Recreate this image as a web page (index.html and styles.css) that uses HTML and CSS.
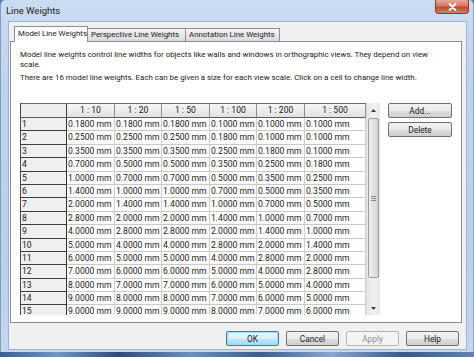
FILE: index.html
```html
<!DOCTYPE html>
<html>
<head>
<meta charset="utf-8">
<title>Line Weights</title>
<link rel="stylesheet" href="styles.css">
</head>
<body>
<div class="window">
  <div class="titlebar">
    <span class="title">Line Weights</span>
    <div class="close"><svg width="9" height="8" viewBox="0 0 9 8"><path d="M1.5 1 L7.5 7 M7.5 1 L1.5 7" stroke="#fff" stroke-width="1.8" stroke-linecap="round"/></svg></div>
  </div>
  <div class="client">
    <div class="tabs">
      <div class="tab active t1">Model Line Weights</div>
      <div class="tab t2">Perspective Line Weights</div>
      <div class="tab t3">Annotation Line Weights</div>
    </div>
    <div class="panel">
      <p class="para">Model line weights control line widths for objects like walls and windows in orthographic views. They depend on view scale.</p>
      <p class="para">There are 16 model line weights. Each can be given a size for each view scale. Click on a cell to change line width.</p>
      <div class="content-row">
        <div class="grid-wrap">
          <div class="viewport">
            <div class="grid">
              <div class="hc corner"></div><div class="hc">1 : 10</div><div class="hc">1 : 20</div><div class="hc">1 : 50</div><div class="hc">1 : 100</div><div class="hc">1 : 200</div><div class="hc last">1 : 500</div>
              <div class="rh">1</div><div class="c">0.1800 mm</div><div class="c">0.1800 mm</div><div class="c">0.1800 mm</div><div class="c">0.1000 mm</div><div class="c">0.1000 mm</div><div class="c">0.1000 mm</div>
              <div class="rh">2</div><div class="c">0.2500 mm</div><div class="c">0.2500 mm</div><div class="c">0.2500 mm</div><div class="c">0.1800 mm</div><div class="c">0.1000 mm</div><div class="c">0.1000 mm</div>
              <div class="rh">3</div><div class="c">0.3500 mm</div><div class="c">0.3500 mm</div><div class="c">0.3500 mm</div><div class="c">0.2500 mm</div><div class="c">0.1800 mm</div><div class="c">0.1000 mm</div>
              <div class="rh">4</div><div class="c">0.7000 mm</div><div class="c">0.5000 mm</div><div class="c">0.5000 mm</div><div class="c">0.3500 mm</div><div class="c">0.2500 mm</div><div class="c">0.1800 mm</div>
              <div class="rh">5</div><div class="c">1.0000 mm</div><div class="c">0.7000 mm</div><div class="c">0.7000 mm</div><div class="c">0.5000 mm</div><div class="c">0.3500 mm</div><div class="c">0.2500 mm</div>
              <div class="rh">6</div><div class="c">1.4000 mm</div><div class="c">1.0000 mm</div><div class="c">1.0000 mm</div><div class="c">0.7000 mm</div><div class="c">0.5000 mm</div><div class="c">0.3500 mm</div>
              <div class="rh">7</div><div class="c">2.0000 mm</div><div class="c">1.4000 mm</div><div class="c">1.4000 mm</div><div class="c">1.0000 mm</div><div class="c">0.7000 mm</div><div class="c">0.5000 mm</div>
              <div class="rh">8</div><div class="c">2.8000 mm</div><div class="c">2.0000 mm</div><div class="c">2.0000 mm</div><div class="c">1.4000 mm</div><div class="c">1.0000 mm</div><div class="c">0.7000 mm</div>
              <div class="rh">9</div><div class="c">4.0000 mm</div><div class="c">2.8000 mm</div><div class="c">2.8000 mm</div><div class="c">2.0000 mm</div><div class="c">1.4000 mm</div><div class="c">1.0000 mm</div>
              <div class="rh">10</div><div class="c">5.0000 mm</div><div class="c">4.0000 mm</div><div class="c">4.0000 mm</div><div class="c">2.8000 mm</div><div class="c">2.0000 mm</div><div class="c">1.4000 mm</div>
              <div class="rh">11</div><div class="c">6.0000 mm</div><div class="c">5.0000 mm</div><div class="c">5.0000 mm</div><div class="c">4.0000 mm</div><div class="c">2.8000 mm</div><div class="c">2.0000 mm</div>
              <div class="rh">12</div><div class="c">7.0000 mm</div><div class="c">6.0000 mm</div><div class="c">6.0000 mm</div><div class="c">5.0000 mm</div><div class="c">4.0000 mm</div><div class="c">2.8000 mm</div>
              <div class="rh">13</div><div class="c">8.0000 mm</div><div class="c">7.0000 mm</div><div class="c">7.0000 mm</div><div class="c">6.0000 mm</div><div class="c">5.0000 mm</div><div class="c">4.0000 mm</div>
              <div class="rh">14</div><div class="c">9.0000 mm</div><div class="c">8.0000 mm</div><div class="c">8.0000 mm</div><div class="c">7.0000 mm</div><div class="c">6.0000 mm</div><div class="c">5.0000 mm</div>
              <div class="rh">15</div><div class="c">9.0000 mm</div><div class="c">9.0000 mm</div><div class="c">9.0000 mm</div><div class="c">8.0000 mm</div><div class="c">7.0000 mm</div><div class="c">6.0000 mm</div>
            </div>
          </div>
          <div class="scrollbar">
            <div class="sb-btn"><svg width="5" height="3" viewBox="0 0 5 3"><path d="M0 3 L2.5 0 L5 3 Z" fill="#3a3a3a"/></svg></div>
            <div class="sb-thumb"><svg width="5" height="5" viewBox="0 0 5 5"><path d="M0 0.5H5M0 2.5H5M0 4.5H5" stroke="#8a8a8a" stroke-width="1"/></svg></div>
            <div class="sb-track"></div>
            <div class="sb-btn"><svg width="5" height="3" viewBox="0 0 5 3"><path d="M0 0 L2.5 3 L5 0 Z" fill="#3a3a3a"/></svg></div>
          </div>
        </div>
        <div class="side-buttons">
          <button class="btn">Add...</button>
          <button class="btn">Delete</button>
        </div>
      </div>
    </div>
    <div class="footer">
      <button class="btn default">OK</button>
      <button class="btn">Cancel</button>
      <button class="btn disabled">Apply</button>
      <button class="btn">Help</button>
    </div>
  </div>
</div>
<div class="desk"></div>
</body>
</html>
```

FILE: styles.css
```css
* { box-sizing: border-box; }
html, body { margin: 0; padding: 0; }
body {
  width: 474px;
  height: 357px;
  overflow: hidden;
  font-family: Roboto, "Noto Sans", sans-serif;
  background: #5a7aa8;
}
.window {
  height: 352px;
  display: flex;
  flex-direction: column;
  background: linear-gradient(#cadcf0, #bed4ec 25%, #b9d0ea 70%, #c3d7ee);
  border-left: 1px solid #7f9cc2;
  border-right: 1px solid #8aa6c9;
  border-radius: 5px 5px 0 0;
}
.titlebar {
  height: 21px;
  flex: none;
  display: flex;
  align-items: flex-start;
  padding-left: 5px;
}
.title {
  font-size: 9.5px;
  line-height: 21px;
  color: #1c1c1c;
}
.close {
  margin-left: auto;
  margin-right: 4px;
  width: 34px;
  height: 14px;
  display: flex;
  align-items: center;
  justify-content: center;
  background: linear-gradient(#e9a896, #d77762 45%, #c4462f 55%, #d3806a);
  border: 1px solid #8a3a2c;
  border-top: none;
  border-radius: 0 0 4px 4px;
}
.client {
  flex: 1;
  margin: 0 6px 2px 7px;
  background: #f0f0f0;
  border: 1px solid #9db3cf;
  padding: 4px 4px 0 1px;
  display: flex;
  flex-direction: column;
}
.tabs {
  height: 15px;
  flex: none;
  display: flex;
  align-items: flex-end;
  padding-left: 4px;
  position: relative;
  z-index: 1;
}
.tab {
  height: 13px;
  font-size: 7.9px;
  line-height: 12px;
  color: #1a1a1a;
  padding-left: 3px;
  background: linear-gradient(#f4f4f4, #e6e6e6 50%, #dadada);
  border: 1px solid #8c8e94;
  border-bottom: none;
  white-space: nowrap;
}
.tab + .tab { border-left: none; }
.tab.active {
  height: 16px;
  margin-bottom: -1px;
  background: #fff;
  line-height: 14px;
}
.t1 { width: 74px; }
.t2 { width: 98px; }
.t3 { width: 94px; }
.panel {
  height: 282px;
  flex: none;
  background: #fff;
  border: 1px solid #898c95;
  padding: 8px 9px 0 9px;
}
.para {
  margin: 0 0 3px 0;
  font-size: 7.9px;
  line-height: 10px;
  color: #1a1a1a;
  max-width: 416px;
}
.content-row {
  display: flex;
  align-items: flex-start;
  gap: 8px;
  margin-top: 20px;
}
.grid-wrap {
  display: flex;
  height: 212px;
}
.viewport {
  width: 346px;
  height: 212px;
  overflow: hidden;
  border-left: 1px solid #4a4a4a;
  border-top: 1px solid #6a6a6a;
}
.grid {
  display: grid;
  grid-template-columns: 46px 48px 47px 48px 47px 48px 61px;
  grid-template-rows: 14px;
  grid-auto-rows: 13.4px;
  font-size: 8.6px;
  color: #1a1a1a;
}
.grid > div {
  white-space: nowrap;
  overflow: hidden;
  line-height: 12.4px;
}
.hc {
  text-align: center;
  background: linear-gradient(#f7f7f7, #ececec 50%, #e1e1e1);
  border-right: 1px solid #8e8e8e;
  border-bottom: 1px solid #5a5a5a;
}
.grid > .hc { line-height: 13px; }
.hc.corner { border-right: 1px solid #3c3c3c; background: #eeeeee; }
.rh {
  background: #efefef;
  border-right: 1px solid #333;
  border-bottom: 1px solid #3c3c3c;
  padding-left: 1px;
}
.c {
  padding-left: 1px;
  border-right: 1px solid #cfcfcf;
  border-bottom: 1px solid #c9c9c9;
  background: #fff;
}
.scrollbar {
  width: 14px;
  height: 212px;
  display: flex;
  flex-direction: column;
  background: linear-gradient(90deg, #e3e3e3, #f2f2f2 50%, #e8e8e8);
  border-left: 1px solid #e0e0e0;
}
.sb-btn {
  height: 14px;
  flex: none;
  display: flex;
  align-items: center;
  justify-content: center;
}
.sb-thumb {
  height: 160px;
  flex: none;
  margin: 1px 1px 0 1px;
  border: 1px solid #9a9a9a;
  border-radius: 2px;
  background: linear-gradient(90deg, #efefef, #e2e2e2 50%, #d3d3d3);
  display: flex;
  align-items: center;
  justify-content: center;
}
.sb-track { flex: 1; }
.side-buttons {
  display: flex;
  flex-direction: column;
  gap: 4px;
}
.btn {
  width: 64px;
  height: 15px;
  padding: 0;
  font-family: inherit;
  font-size: 8.3px;
  line-height: 12px;
  color: #1a1a1a;
  border: 1px solid #707070;
  border-radius: 2px;
  background: linear-gradient(#f2f2f2, #ebebeb 50%, #dddddd 51%, #cfcfcf);
}
.footer {
  display: flex;
  justify-content: flex-end;
  gap: 7px;
  padding: 8px 3px 0 0;
}
.footer .btn { width: 53px; height: 15px; }
.btn.default {
  border-color: #3c7fb1;
  box-shadow: inset 0 0 0 1px #9fdcf6;
  background: linear-gradient(#eaf6fd, #d9f0fc 50%, #bee6fd 51%, #a7d9f5);
}
.btn.disabled {
  color: #8d8d8d;
  border-color: #b5b5b5;
  background: #f4f4f4;
}
.desk {
  height: 5px;
  background: linear-gradient(90deg, #3b5c8c, #7394c4 12%, #2f4a78 25%, #6d8ebe 40%, #3e5d8e 55%, #8aa6cf 70%, #395887 85%, #6283b3);
}
```
